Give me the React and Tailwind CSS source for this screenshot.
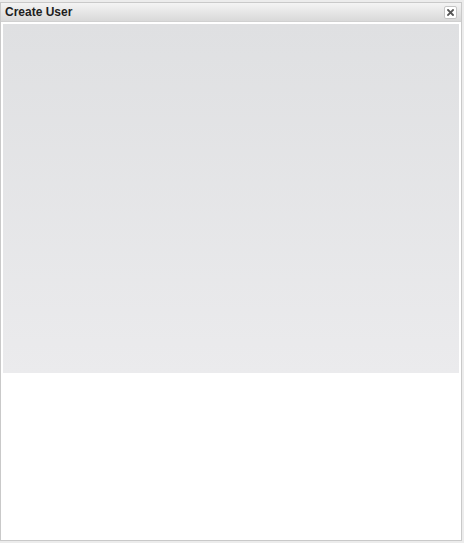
// Create User dialog – 464x543

export default function App() {
  return (
    <div className="w-[464px] h-[543px] bg-[#ececec] pt-[2px] font-['Liberation_Sans',Arial,sans-serif]">
      <div className="flex flex-col w-[462px] h-[539px] bg-white border border-[#c9c9c9]">
        {/* Title bar */}
        <div className="flex items-center justify-between h-[19px] pl-[4px] pr-[4px] bg-gradient-to-b from-[#f4f4f4] to-[#d9d9d9] border-b border-[#d0d0d0]">
          <span className="text-[12px] leading-[14px] font-bold text-[#1e1e1e]">Create User</span>
          <button className="flex items-center justify-center w-[13px] h-[13px] bg-white border border-[#c4c4c4] rounded-[2px]">
            <svg width="7" height="7" viewBox="0 0 7 7">
              <path d="M1 1L6 6M6 1L1 6" stroke="#555" strokeWidth="1.8" strokeLinecap="square" />
            </svg>
          </button>
        </div>
        {/* Content */}
        <div className="mx-[2px] mt-[2px] h-[349px] bg-gradient-to-b from-[#dfe0e2] to-[#ebebed]" />
        <div className="flex-1 bg-white" />
      </div>
    </div>
  )
}
